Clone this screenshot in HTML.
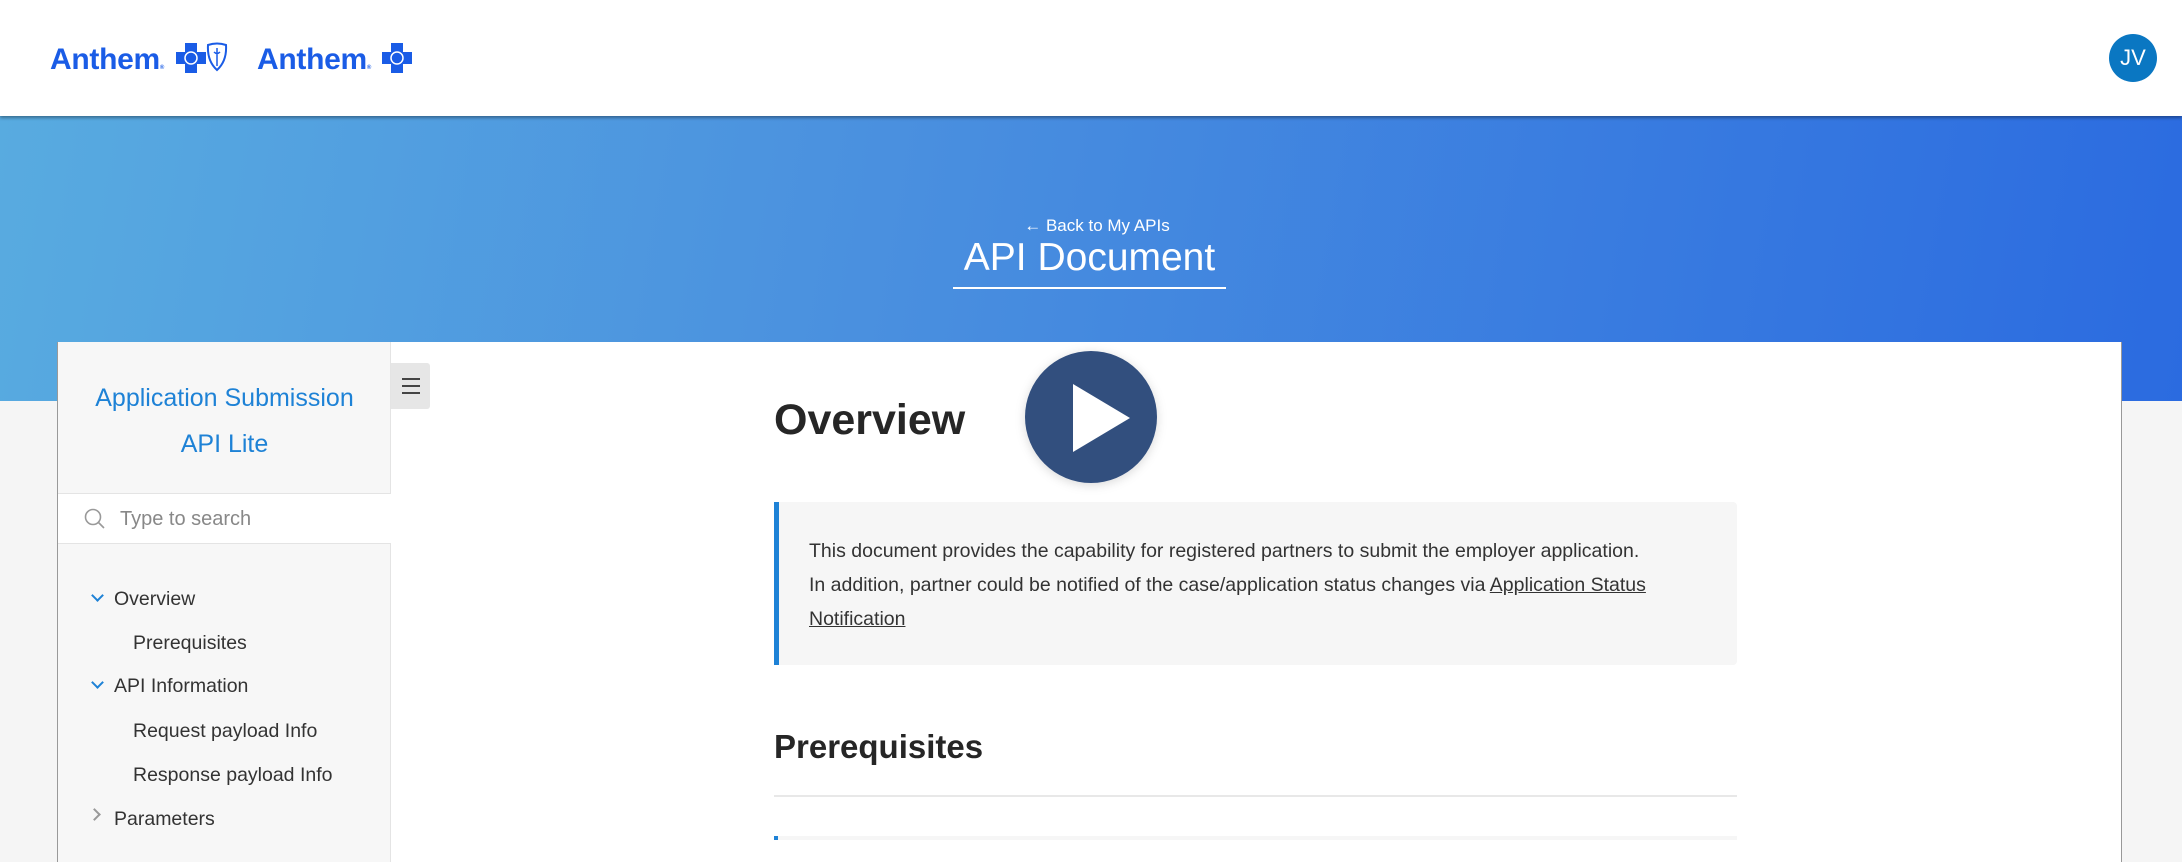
<!DOCTYPE html>
<html><head><meta charset="utf-8"><style>
*{box-sizing:border-box;margin:0;padding:0}
body{width:2182px;height:840px;overflow:hidden;background:#f5f5f5;font-family:"Liberation Sans",sans-serif;position:relative}
.hdr{position:absolute;left:0;top:0;width:2182px;height:116px;background:#fff;box-shadow:0 2px 3px rgba(0,0,0,.35);z-index:3}
.logo{position:absolute;top:43px;font-weight:bold;font-size:30px;color:#1a5ce6;letter-spacing:-0.3px}
.av{position:absolute;left:2109px;top:34px;width:48px;height:48px;border-radius:50%;background:#0a77c2;color:#fff;font-size:22px;text-align:center;line-height:48px}
.band{position:absolute;left:0;top:116px;width:2182px;height:285px;background:linear-gradient(100deg,#58abe0 0%,#4a90df 40%,#2b6be0 100%)}
.back{position:absolute;left:0;width:2194px;text-align:center;top:216px;color:#fff;font-size:17px}
.title{position:absolute;left:953px;top:236px;width:273px;text-align:center;color:#fff;font-size:39px;border-bottom:2px solid #fff;padding-bottom:4px;height:53px}
.card{position:absolute;left:57px;top:342px;width:2065px;height:520px;background:#fff;border:1px solid #999;border-top:none;border-bottom:none}
.side{position:absolute;left:0;top:0;width:333px;height:520px;background:#f7f7f7;border-right:1px solid #e4e4e4}
.stitle{position:absolute;left:0;top:33px;width:333px;text-align:center;color:#1e82d6;font-size:25px;line-height:46px}
.search{position:absolute;left:0;top:151px;width:333px;height:51px;background:#fff;border-top:1px solid #e4e4e4;border-bottom:1px solid #e4e4e4}
.search span{position:absolute;left:62px;top:14px;font-size:20px;color:#888}
.nav{position:absolute;font-size:19.5px;color:#333}
.chev{position:absolute;width:9px;height:9px;border-right:2px solid #1e82d6;border-bottom:2px solid #1e82d6;transform:rotate(45deg)}
.ham{position:absolute;left:333px;top:21px;width:39px;height:46px;background:#e6e6e6;border-radius:0 3px 3px 0}
.ham i{position:absolute;left:11px;width:18px;height:1.5px;background:#444}
h1{position:absolute;font-size:43px;font-weight:bold;color:#262626}
.quote{position:absolute;width:963px;height:163px;background:#f6f6f6;border-left:5px solid #1e82d6;border-radius:0 4px 4px 0;padding:32px 0 0 30px;font-size:19.5px;line-height:34px;color:#333}
h2{position:absolute;font-size:33px;font-weight:bold;color:#262626}
.hr{position:absolute;width:963px;height:2px;background:#e8e8e8}
</style></head><body>
<div class="hdr">
 <div class="logo" style="left:50px">Anthem<span style="font-size:6px">®</span></div>
 <svg style="position:absolute;left:176px;top:43px" width="30" height="30" viewBox="0 0 30 30"><path d="M9 0H21V9H30V21H21V30H9V21H0V9H9Z" fill="#1a5ce6"/><circle cx="15" cy="15" r="6" fill="none" stroke="#fff" stroke-width="1.5"/></svg>
 <svg style="position:absolute;left:206px;top:42px" width="22" height="30" viewBox="0 0 22 30"><path d="M2 3 Q11 0 20 3 Q21 19 11 28 Q1 19 2 3Z" fill="none" stroke="#1a5ce6" stroke-width="2"/><path d="M11 6V24M8 10Q11 13 14 10" stroke="#1a5ce6" stroke-width="1.5" fill="none"/></svg>
 <div class="logo" style="left:257px">Anthem<span style="font-size:6px">®</span></div>
 <svg style="position:absolute;left:382px;top:43px" width="30" height="30" viewBox="0 0 30 30"><path d="M9 0H21V9H30V21H21V30H9V21H0V9H9Z" fill="#1a5ce6"/><circle cx="15" cy="15" r="6" fill="none" stroke="#fff" stroke-width="1.5"/></svg>
 <div class="av">JV</div>
</div>
<div class="band"></div>
<div class="back">&#8592; Back to My APIs</div>
<div class="title">API Document</div>
<div class="card">
 <div class="side">
  <div class="stitle">Application Submission<br>API Lite</div>
  <div class="search"><svg style="position:absolute;left:26px;top:14px" width="22" height="22" viewBox="0 0 22 22"><circle cx="9" cy="9" r="7.5" fill="none" stroke="#999" stroke-width="1.6"/><path d="M14.5 14.5L20 20" stroke="#999" stroke-width="1.6"/></svg><span>Type to search</span></div>
  <div class="chev" style="left:35px;top:249px"></div><div class="nav" style="left:56px;top:246px">Overview</div>
  <div class="nav" style="left:75px;top:290px">Prerequisites</div>
  <div class="chev" style="left:35px;top:336px"></div><div class="nav" style="left:56px;top:333px">API Information</div>
  <div class="nav" style="left:75px;top:378px">Request payload Info</div>
  <div class="nav" style="left:75px;top:422px">Response payload Info</div>
  <div class="chev" style="left:32px;top:468px;border-color:#999;transform:rotate(-45deg)"></div><div class="nav" style="left:56px;top:466px">Parameters</div>
 </div>
 <div class="ham"><i style="top:15px"></i><i style="top:22px"></i><i style="top:29px"></i></div>
 <svg style="position:absolute;left:948px;top:-10px" width="170" height="170" viewBox="0 0 170 170"><defs><filter id="s"><feDropShadow dx="0" dy="2" stdDeviation="5" flood-opacity=".15"/></filter></defs><circle cx="85" cy="85" r="66" fill="#334f7e" filter="url(#s)"/><path d="M67 52L124 86L67 120Z" fill="#fff"/></svg>
</div>
<h1 style="top:396px;left:774px">Overview</h1>
<div class="quote" style="left:774px;top:502px">This document provides the capability for registered partners to submit the employer application.<br>In addition, partner could be notified of the case/application status changes via <u>Application Status</u><br><u>Notification</u></div>
<h2 style="left:774px;top:728px">Prerequisites</h2>
<div class="hr" style="left:774px;top:795px"></div>
<div style="position:absolute;left:774px;top:836px;width:963px;height:4px;background:#f6f6f6;border-left:4px solid #1e82d6"></div>
</body></html>
